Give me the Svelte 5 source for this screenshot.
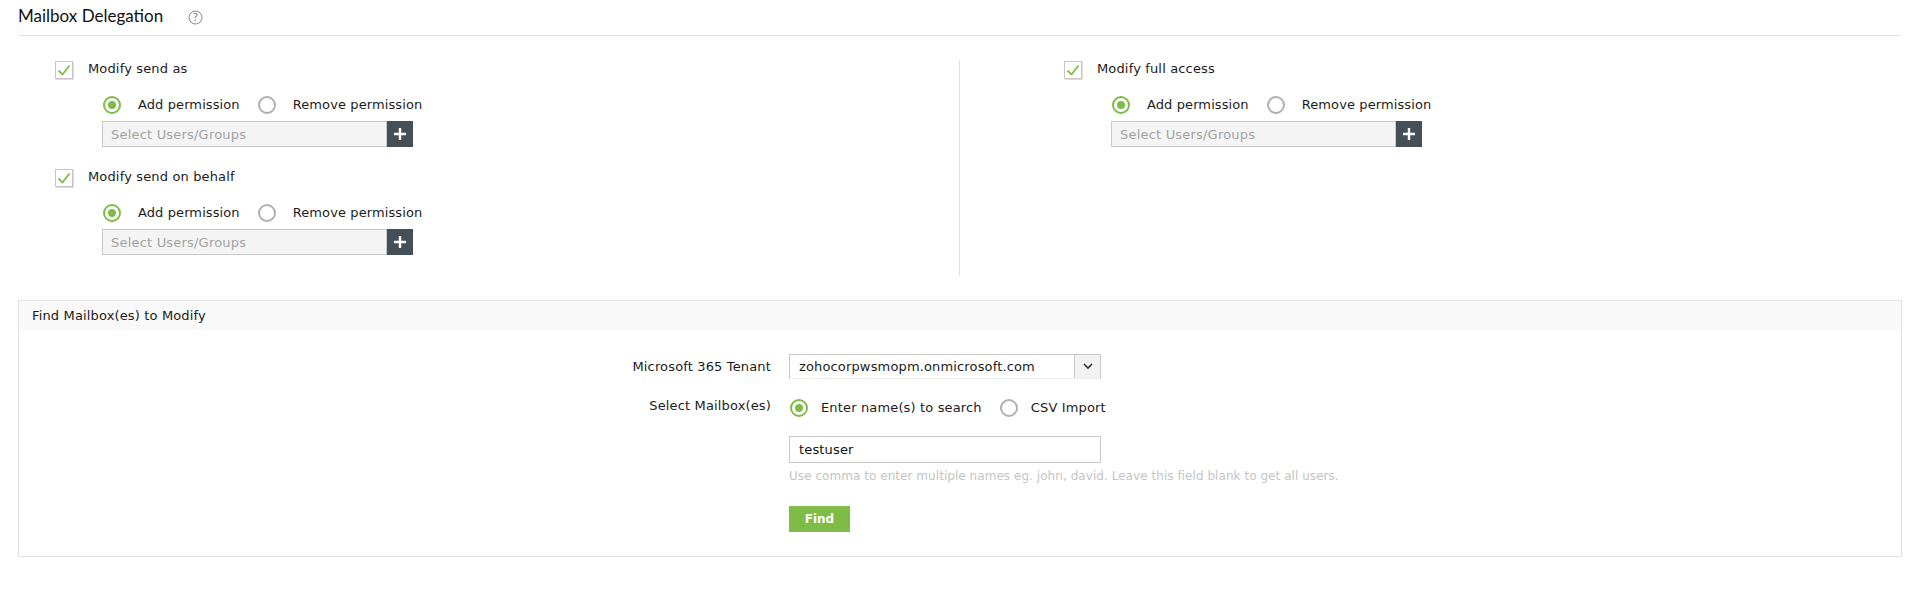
<script>
  const leftGroups = ['Modify send as', 'Modify send on behalf'];
  const rightGroups = ['Modify full access'];
</script>

{#snippet group(label)}
  <div class="group">
    <div class="check-row">
      <span class="checkbox">
        <svg width="16" height="16" viewBox="0 0 16 16"><path d="M2.5 8.5 L6.5 12.5 L13.5 3.5" fill="none" stroke="#7fbc47" stroke-width="1.8" /></svg>
      </span>
      <span class="text">{label}</span>
    </div>
    <div class="perm-row">
      <span class="radio on"></span><span class="text add">Add permission</span>
      <span class="radio"></span><span class="text">Remove permission</span>
    </div>
    <div class="picker">
      <div class="picker-input">Select Users/Groups</div>
      <div class="picker-btn">
        <svg width="14" height="14" viewBox="0 0 14 14"><path d="M7 1 V13 M1 7 H13" stroke="#fff" stroke-width="2.4" /></svg>
      </div>
    </div>
  </div>
{/snippet}

<div class="page">
  <div class="head">
    <h1>Mailbox Delegation</h1>
    <svg class="help" width="15" height="15" viewBox="0 0 15 15">
      <circle cx="7.5" cy="7.5" r="6.5" fill="none" stroke="#8a8a8a" stroke-width="1" />
      <text x="7.5" y="11.2" text-anchor="middle" font-size="11" font-family="Lato, sans-serif" fill="#777">?</text>
    </svg>
  </div>

  <div class="columns">
    <div class="col left">
      {#each leftGroups as g}
        {@render group(g)}
      {/each}
    </div>
    <div class="col right">
      {#each rightGroups as g}
        {@render group(g)}
      {/each}
    </div>
  </div>

  <div class="panel">
    <div class="panel-title">Find Mailbox(es) to Modify</div>
    <div class="form">
      <div class="row tenant">
        <div class="label">Microsoft 365 Tenant</div>
        <div class="select">
          <span class="select-val">zohocorpwsmopm.onmicrosoft.com</span>
          <span class="select-arrow">
            <svg width="10" height="7" viewBox="0 0 10 7"><path d="M1 1 L5 5 L9 1" fill="none" stroke="#333" stroke-width="1.6" /></svg>
          </span>
        </div>
      </div>
      <div class="row mailbox">
        <div class="label">Select Mailbox(es)</div>
        <div class="radios">
          <span class="radio on tight"></span><span class="text add2">Enter name(s) to search</span>
          <span class="radio tight"></span><span class="text">CSV Import</span>
        </div>
      </div>
      <div class="row">
        <div class="label"></div>
        <div class="field">
          <div class="textbox">testuser</div>
          <div class="hint">Use comma to enter multiple names eg. john, david. Leave this field blank to get all users.</div>
          <button class="find">Find</button>
        </div>
      </div>
    </div>
  </div>
</div>

<style>
  :global(body) {
    margin: 0;
    background: #fff;
  }

  .page {
    height: 604px;
    box-sizing: border-box;
    padding: 0 18px;
    font-family: "DejaVu Sans", sans-serif;
    font-size: 13px;
    letter-spacing: 0.15px;
    color: #1c1c1c;
  }

  .head {
    display: flex;
    align-items: center;
    height: 35px;
    border-bottom: 1px solid #e3e3e3;
  }

  h1 {
    margin: 0 0 4px;
    font-family: Lato, sans-serif;
    font-size: 17px;
    font-weight: 400;
    letter-spacing: 0;
    color: #111;
  }

  .help {
    margin-left: 25px;
  }

  .columns {
    display: flex;
    height: 216px;
    margin-top: 24px;
    margin-bottom: 24px;
  }

  .col {
    width: 50%;
    padding-left: 37px;
    box-sizing: border-box;
  }

  .col.left {
    flex: 0 0 942px;
    border-right: 1px solid #e3e3e3;
  }

  .col.right {
    padding-left: 104px;
  }

  .group {
    margin-bottom: 21px;
  }

  .check-row {
    display: flex;
    align-items: flex-start;
    height: 19px;
  }

  .check-row .text {
    margin-top: 1px;
  }

  .checkbox {
    display: flex;
    align-items: center;
    justify-content: center;
    width: 16px;
    height: 16px;
    border: 1px solid #c6c6c6;
    margin-top: 1px;
    margin-right: 15px;
    box-shadow: 1px 1px 0 #ddd;
  }

  .text {
    line-height: 16px;
    white-space: nowrap;
  }

  .perm-row {
    display: flex;
    align-items: center;
    margin: 16px 0 7px 48px;
    height: 19px;
    letter-spacing: 0.1px;
  }

  .radio {
    flex: none;
    width: 14px;
    height: 14px;
    border: 2px solid #b0b0b0;
    border-radius: 50%;
    margin-right: 17px;
    position: relative;
  }

  .radio.tight {
    margin-right: 13px;
  }

  .radio.on {
    border-color: #7fbc47;
  }

  .radio.on::after {
    content: '';
    position: absolute;
    left: 3px;
    top: 3px;
    width: 8px;
    height: 8px;
    border-radius: 50%;
    background: #7fbc47;
  }

  .add {
    margin-right: 18px;
  }

  .picker {
    display: flex;
    margin-left: 47px;
    height: 26px;
  }

  .picker-input {
    width: 285px;
    box-sizing: border-box;
    border: 1px solid #c9c9c9;
    background: #f4f4f4;
    color: #a3a3a3;
    padding-left: 8px;
    line-height: 25px;
    letter-spacing: 0.2px;
  }

  .picker-btn {
    width: 26px;
    background: #444f57;
    display: flex;
    align-items: center;
    justify-content: center;
  }

  .panel {
    border: 1px solid #e3e3e3;
    height: 255px;
  }

  .panel-title {
    background: #f9f9f9;
    height: 29px;
    line-height: 29px;
    padding-left: 13px;
  }

  .form {
    padding-top: 24px;
  }

  .row {
    display: flex;
  }

  .label {
    width: 752px;
    flex: none;
    text-align: right;
    margin-right: 18px;
    line-height: 16px;
  }

  .tenant {
    align-items: center;
    height: 25px;
  }

  .select {
    width: 312px;
    height: 25px;
    box-sizing: border-box;
    border: 1px solid #c9c9c9;
    border-bottom-color: #eee;
    display: flex;
    align-items: center;
  }

  .select-val {
    flex: 1;
    padding-left: 9px;
  }

  .select-arrow {
    width: 25px;
    height: 100%;
    background: #f2f2f2;
    border-left: 1px solid #c9c9c9;
    display: flex;
    align-items: center;
    justify-content: center;
  }

  .mailbox {
    margin-top: 19px;
  }

  .radios {
    display: flex;
    align-items: center;
    margin-left: 1px;
    height: 19px;
    margin-top: 0;
  }

  .add2 {
    margin-right: 18px;
  }

  .field {
    margin-top: 19px;
  }

  .textbox {
    width: 312px;
    height: 27px;
    box-sizing: border-box;
    border: 1px solid #c9c9c9;
    padding-left: 9px;
    line-height: 25px;
    color: #111;
  }

  .hint {
    margin-top: 5px;
    font-size: 12px;
    letter-spacing: 0.05px;
    line-height: 16px;
    color: #c4c4c4;
    white-space: nowrap;
  }

  .find {
    display: block;
    margin-top: 22px;
    width: 61px;
    height: 26px;
    border: 0;
    background: #7fbc47;
    color: #fff;
    font: 700 12px "DejaVu Sans", sans-serif;
  }
</style>
